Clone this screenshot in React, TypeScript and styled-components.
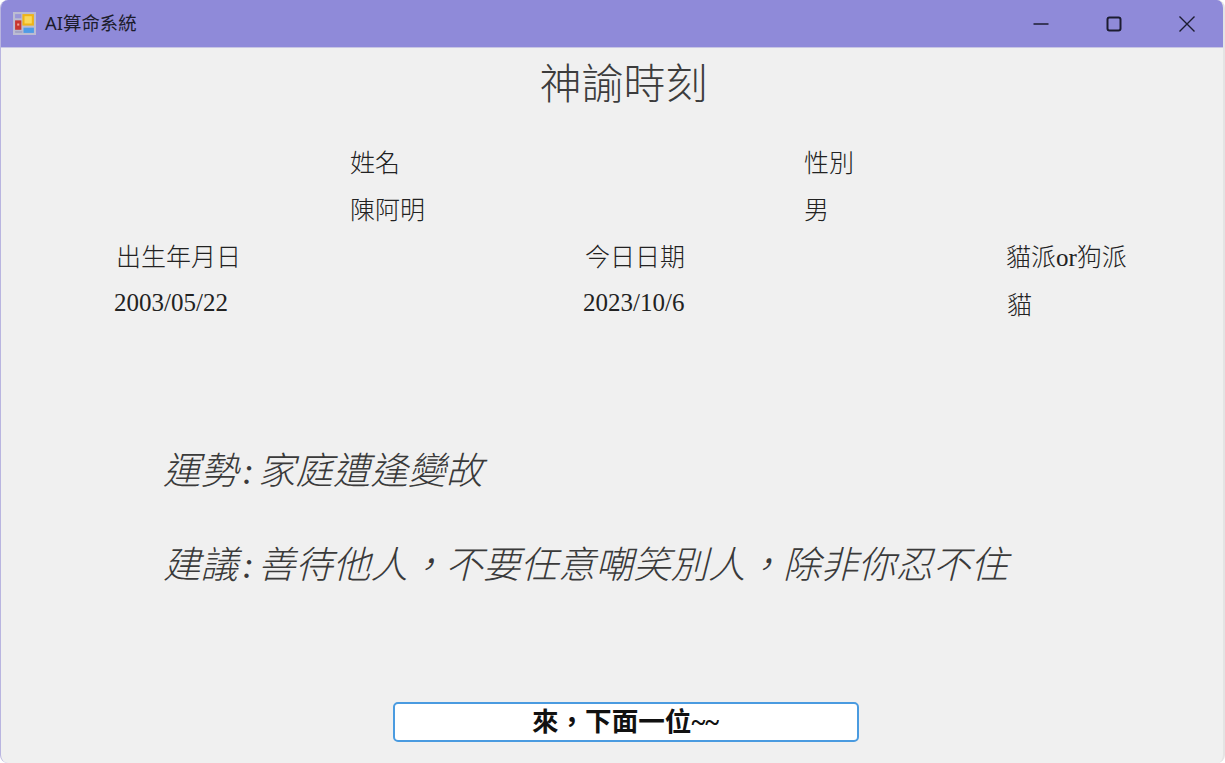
import React from "react";
import styled, { createGlobalStyle } from "styled-components";

const GlobalStyle = createGlobalStyle`
    html, body {
        margin: 0;
        padding: 0;
        background: #ffffff;
        overflow: hidden;
    }
`

const Window = styled.div`
    box-sizing: border-box;
    width: 1225px;
    height: 763px;
    display: flex;
    flex-direction: column;
    background-color: #f0f0f0;
    border-radius: 8px;
    border-left: 1px solid #b9b5e0;
    border-right: 2px solid #e4e4e4;
    overflow: hidden;
    font-family: "Liberation Serif", "Noto Sans CJK TC", serif;
    color: #222;
`

const TitleBar = styled.div`
    flex: none;
    height: 47px;
    margin: 0 -2px 0 -1px;
    display: flex;
    align-items: center;
    background-color: #8f8ad9;
    border-bottom: 1px solid #c8c6e4;
`

const AppIcon = styled.svg`
    width: 23px;
    height: 23px;
    margin-left: 13px;
    margin-top: -1px;
`

const AppName = styled.span`
    margin-left: 9px;
    margin-top: -3px;
    font-family: "Noto Sans", "Noto Sans CJK TC", sans-serif;
    font-size: 18.4px;
    color: #1c1c2c;
`

const WindowButtons = styled.div`
    margin-left: auto;
    padding-right: 2px;
    display: flex;
`

const WindowButton = styled.div`
    width: 73px;
    height: 47px;
    display: flex;
    align-items: center;
    justify-content: center;
`

const Glyph = styled.svg<{ $heavy?: boolean }>`
    width: 18px;
    height: 18px;
    fill: none;
    stroke: #1c1c30;
    stroke-width: ${(p) => (p.$heavy ? 2 : 1.4)};
`

const Body = styled.div`
    flex: 1;
    display: flex;
    flex-direction: column;
`

const Heading = styled.h1`
    margin: 9px 0 0;
    padding-left: 23px;
    height: 56px;
    line-height: 56px;
    text-align: center;
    font-size: 42px;
    font-weight: 300;
    color: #3c3c3c;
`

const InfoGrid = styled.div`
    margin-top: 24px;
    display: flex;
    flex-direction: column;
`

const InfoRow = styled.div<{ $columns: string; $inset: number; $height?: number }>`
    height: ${(p) => p.$height ?? 47}px;
    display: grid;
    grid-template-columns: ${(p) => p.$columns};
    padding-left: ${(p) => p.$inset}px;
    align-items: center;
    font-size: 25px;
    font-weight: 300;
    white-space: nowrap;
`

const Fortune = styled.div`
    padding: 120px 0 0 162px;
    display: flex;
    flex-direction: column;
    gap: 47px;
`

const FortuneLine = styled.div`
    height: 47px;
    line-height: 47px;
    font-size: 37.5px;
    font-style: italic;
    font-weight: 300;
    color: #3a3a3a;
    white-space: nowrap;
`

const Colon = styled.span`
    display: inline-block;
    width: 20px;
    text-align: center;
`

const Footer = styled.div`
    margin-top: auto;
    padding: 0 0 21px 27px;
    display: flex;
    justify-content: center;
`

const NextButton = styled.button`
    box-sizing: border-box;
    width: 466px;
    height: 40px;
    padding: 0;
    background: #ffffff;
    border: 2px solid #4a9be0;
    border-radius: 5px;
    font-family: "Liberation Serif", "Noto Sans CJK TC", serif;
    font-size: 26.6px;
    line-height: 30px;
    font-weight: 700;
    color: #111;
`

const App = () => (
    <>
        <GlobalStyle />
        <Window>
            <TitleBar>
                <AppIcon viewBox="0 0 22 22">
                    <rect x="0" y="0" width="22" height="22" fill="#bcbcd2" />
                    <rect x="2" y="2" width="6" height="4" fill="#9a96d8" />
                    <rect x="2" y="8" width="6" height="9" fill="#c8362e" />
                    <rect x="4" y="11" width="2" height="2" fill="#eda498" />
                    <rect x="9" y="2" width="11" height="11" fill="#efb417" />
                    <rect x="11" y="4" width="7" height="7" fill="#f9d85c" />
                    <rect x="10" y="15" width="10" height="5" fill="#4f9be6" />
                    <rect x="2" y="18" width="7" height="2" fill="#a3a3c6" />
                </AppIcon>
                <AppName>AI算命系統</AppName>
                <WindowButtons>
                    <WindowButton>
                        <Glyph viewBox="0 0 18 18">
                            <path d="M1.5 9h15" />
                        </Glyph>
                    </WindowButton>
                    <WindowButton>
                        <Glyph viewBox="0 0 18 18" $heavy>
                            <rect x="2.5" y="2.5" width="13" height="13" rx="2" />
                        </Glyph>
                    </WindowButton>
                    <WindowButton>
                        <Glyph viewBox="0 0 18 18">
                            <path d="M1.5 1.5l15 15M16.5 1.5l-15 15" />
                        </Glyph>
                    </WindowButton>
                </WindowButtons>
            </TitleBar>
            <Body>
                <Heading>神諭時刻</Heading>
                <InfoGrid>
                    <InfoRow $columns="454px 1fr" $inset={349}>
                        <span>姓名</span>
                        <span>性別</span>
                    </InfoRow>
                    <InfoRow $columns="454px 1fr" $inset={349}>
                        <span>陳阿明</span>
                        <span>男</span>
                    </InfoRow>
                    <InfoRow $columns="469px 421px 1fr" $inset={115}>
                        <span>出生年月日</span>
                        <span>今日日期</span>
                        <span>貓派or狗派</span>
                    </InfoRow>
                    <InfoRow $columns="469px 424px 1fr" $inset={113} $height={50}>
                        <span>2003/05/22</span>
                        <span>2023/10/6</span>
                        <span>貓</span>
                    </InfoRow>
                </InfoGrid>
                <Fortune>
                    <FortuneLine>運勢<Colon>:</Colon>家庭遭逢變故</FortuneLine>
                    <FortuneLine>建議<Colon>:</Colon>善待他人&#65292;不要任意嘲笑別人&#65292;除非你忍不住</FortuneLine>
                </Fortune>
                <Footer>
                    <NextButton>來&#65292;下面一位~~</NextButton>
                </Footer>
            </Body>
        </Window>
    </>
);

export default App;
